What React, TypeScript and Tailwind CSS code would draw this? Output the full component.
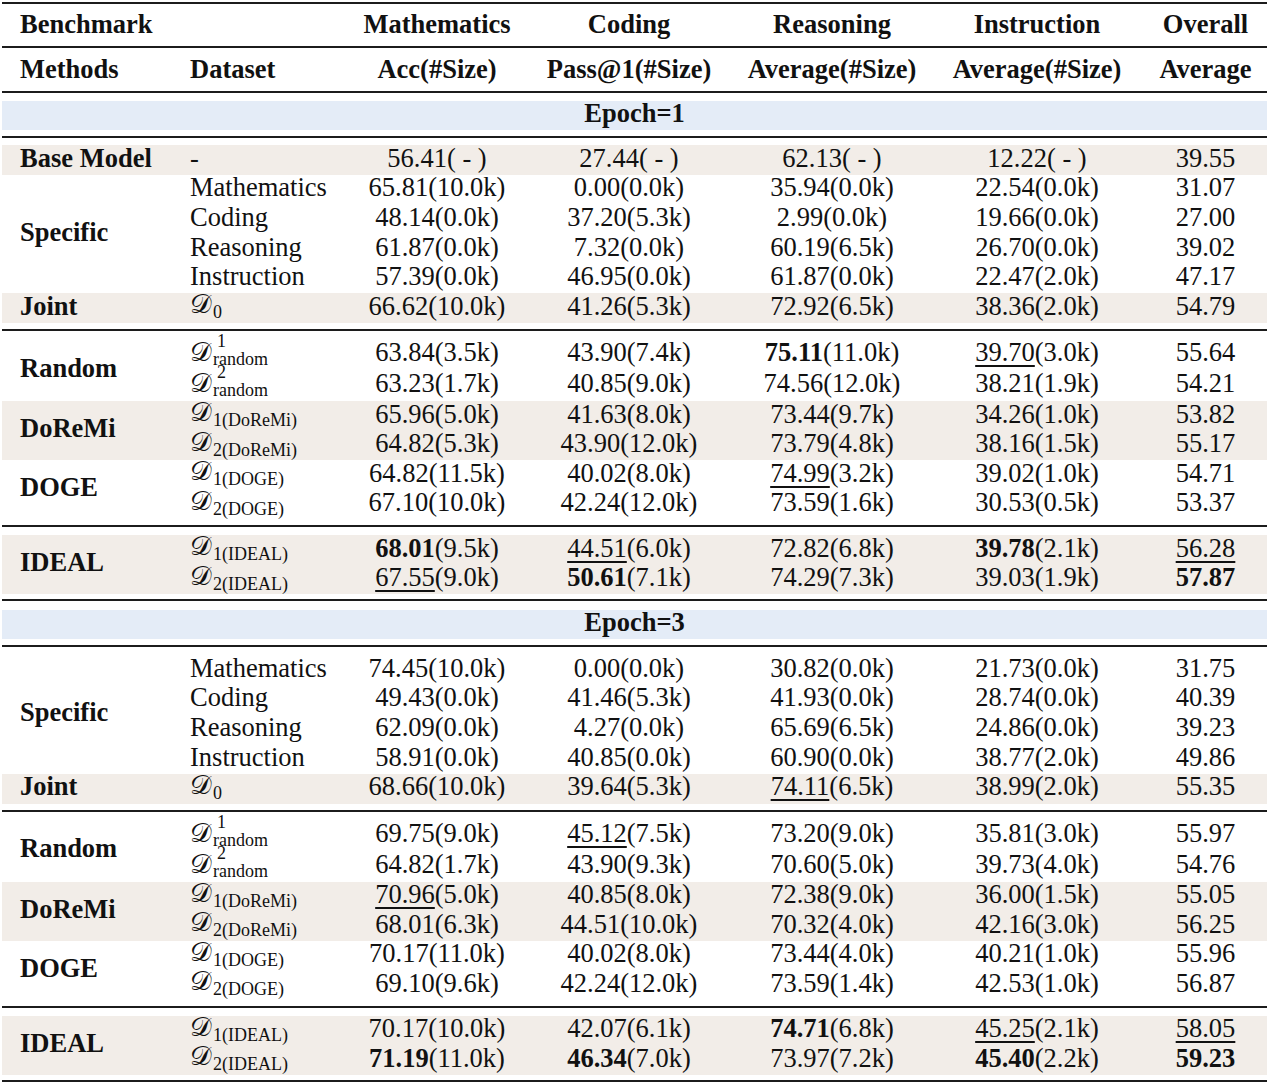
import React from 'react';

const GRID = 'grid grid-cols-[178px_170px_174px_210px_196px_214px_123px]';

function Val({ v }: { v: string }) {
  const m = v.match(/^(\*\*|__)(.+?)\1(.*)$/);
  if (!m) return <>{v}</>;
  const [, mark, head, tail] = m;
  return (
    <>
      {mark === '**' ? (
        <span className="font-bold">{head}</span>
      ) : (
        <span className="underline decoration-[1.5px] underline-offset-[4px]">{head}</span>
      )}
      {tail}
    </>
  );
}

const Cal = () => <span>𝒟</span>;

// D with a plain subscript, e.g. D_1(DoReMi)
const DSub = ({ sub }: { sub: string }) => (
  <span className="whitespace-nowrap">
    <Cal />
    <span className="relative top-[5px] ml-[1px] text-[18px]">{sub}</span>
  </span>
);

// D with stacked sup/sub, e.g. D^1_random
const DRand = ({ n }: { n: string }) => (
  <span className="whitespace-nowrap">
    <Cal />
    <span className="relative ml-[1px] inline-block text-[18px] leading-[12px]">
      <span className="relative top-[4px]">random</span>
      <span className="absolute left-[4px] top-[-14px]">{n}</span>
    </span>
  </span>
);

type Row = { ds: React.ReactNode; cells: string[] };

const SPAN: Record<number, string> = { 1: 'row-span-1', 2: 'row-span-2', 4: 'row-span-4' };

function Group({
  method,
  rows,
  shade,
  rowH,
}: {
  method: string;
  rows: Row[];
  shade?: boolean;
  rowH: string;
}) {
  return (
    <div className={`${GRID} ${rowH} ${shade ? 'bg-[#f2ede8]' : ''}`}>
      <div className={`${SPAN[rows.length]} col-start-1 flex items-center pb-[3px] pl-[18px] font-bold`}>
        {method}
      </div>
      {rows.map((r, i) => (
        <React.Fragment key={i}>
          <div className="col-start-2 flex items-center pb-[3px] pl-[10px]">{r.ds}</div>
          {r.cells.map((c, j) => (
            <div key={j} className="flex items-center justify-center whitespace-pre pb-[3px]">
              <Val v={c} />
            </div>
          ))}
        </React.Fragment>
      ))}
    </div>
  );
}

const Rule = ({ cls }: { cls: string }) => <div className={`h-[2px] bg-[#1c1c1c] ${cls}`} />;

const EpochBand = ({ label }: { label: string }) => (
  <div className="flex h-[29px] items-center justify-center bg-[#e4ecf7] pb-[4px] font-bold">{label}</div>
);

const specific = (vals: string[][]): Row[] =>
  ['Mathematics', 'Coding', 'Reasoning', 'Instruction'].map((n, i) => ({ ds: n, cells: vals[i] }));

export default function App() {
  return (
    <div className="min-h-screen bg-white">
      <div className="ml-[2px] w-[1265px] pt-[2px] font-['Liberation_Serif','Times_New_Roman',serif] text-[26.5px] leading-[29.6px] text-[#111]">
        <Rule cls="" />
        {/* header */}
        <div className={`${GRID} h-[42px] items-center font-bold`}>
          <div className="col-span-2 pl-[18px]">Benchmark</div>
          <div className="text-center">Mathematics</div>
          <div className="text-center">Coding</div>
          <div className="text-center">Reasoning</div>
          <div className="text-center">Instruction</div>
          <div className="text-center">Overall</div>
        </div>
        <Rule cls="h-[1.5px]" />
        <div className={`${GRID} h-[43px] items-center font-bold`}>
          <div className="pl-[18px]">Methods</div>
          <div className="pl-[10px]">Dataset</div>
          <div className="text-center">Acc(#Size)</div>
          <div className="text-center">Pass@1(#Size)</div>
          <div className="text-center">Average(#Size)</div>
          <div className="text-center">Average(#Size)</div>
          <div className="text-center">Average</div>
        </div>
        <Rule cls="mb-[8px]" />
        <EpochBand label="Epoch=1" />
        <Rule cls="mt-[6px] mb-[7px]" />

        <Group
          method="Base Model"
          shade
          rowH="auto-rows-[29.7px]"
          rows={[{ ds: '-', cells: ['56.41( - )', '27.44( - )', '62.13( - )', '12.22( - )', '39.55'] }]}
        />
        <Group
          method="Specific"
          rowH="auto-rows-[29.7px]"
          rows={specific([
            ['65.81(10.0k)', '0.00(0.0k)', '35.94(0.0k)', '22.54(0.0k)', '31.07'],
            ['48.14(0.0k)', '37.20(5.3k)', '2.99(0.0k)', '19.66(0.0k)', '27.00'],
            ['61.87(0.0k)', '7.32(0.0k)', '60.19(6.5k)', '26.70(0.0k)', '39.02'],
            ['57.39(0.0k)', '46.95(0.0k)', '61.87(0.0k)', '22.47(2.0k)', '47.17'],
          ])}
        />
        <Group
          method="Joint"
          shade
          rowH="auto-rows-[29.7px]"
          rows={[{ ds: <DSub sub="0" />, cells: ['66.62(10.0k)', '41.26(5.3k)', '72.92(6.5k)', '38.36(2.0k)', '54.79'] }]}
        />
        <Rule cls="mt-[6px] mb-[8px]" />

        <Group
          method="Random"
          rowH="auto-rows-[31px]"
          rows={[
            { ds: <DRand n="1" />, cells: ['63.84(3.5k)', '43.90(7.4k)', '**75.11**(11.0k)', '__39.70__(3.0k)', '55.64'] },
            { ds: <DRand n="2" />, cells: ['63.23(1.7k)', '40.85(9.0k)', '74.56(12.0k)', '38.21(1.9k)', '54.21'] },
          ]}
        />
        <Group
          method="DoReMi"
          shade
          rowH="auto-rows-[29.5px]"
          rows={[
            { ds: <DSub sub="1(DoReMi)" />, cells: ['65.96(5.0k)', '41.63(8.0k)', '73.44(9.7k)', '34.26(1.0k)', '53.82'] },
            { ds: <DSub sub="2(DoReMi)" />, cells: ['64.82(5.3k)', '43.90(12.0k)', '73.79(4.8k)', '38.16(1.5k)', '55.17'] },
          ]}
        />
        <Group
          method="DOGE"
          rowH="auto-rows-[29.5px]"
          rows={[
            { ds: <DSub sub="1(DOGE)" />, cells: ['64.82(11.5k)', '40.02(8.0k)', '__74.99__(3.2k)', '39.02(1.0k)', '54.71'] },
            { ds: <DSub sub="2(DOGE)" />, cells: ['67.10(10.0k)', '42.24(12.0k)', '73.59(1.6k)', '30.53(0.5k)', '53.37'] },
          ]}
        />
        <Rule cls="mt-[6px] mb-[8px]" />
        <Group
          method="IDEAL"
          shade
          rowH="auto-rows-[29.5px]"
          rows={[
            { ds: <DSub sub="1(IDEAL)" />, cells: ['**68.01**(9.5k)', '__44.51__(6.0k)', '72.82(6.8k)', '**39.78**(2.1k)', '__56.28__'] },
            { ds: <DSub sub="2(IDEAL)" />, cells: ['__67.55__(9.0k)', '**50.61**(7.1k)', '74.29(7.3k)', '39.03(1.9k)', '**57.87**'] },
          ]}
        />
        <Rule cls="mt-[5px] mb-[9px]" />
        <EpochBand label="Epoch=3" />
        <Rule cls="mt-[6px] mb-[8px]" />

        <Group
          method="Specific"
          rowH="auto-rows-[29.7px]"
          rows={specific([
            ['74.45(10.0k)', '0.00(0.0k)', '30.82(0.0k)', '21.73(0.0k)', '31.75'],
            ['49.43(0.0k)', '41.46(5.3k)', '41.93(0.0k)', '28.74(0.0k)', '40.39'],
            ['62.09(0.0k)', '4.27(0.0k)', '65.69(6.5k)', '24.86(0.0k)', '39.23'],
            ['58.91(0.0k)', '40.85(0.0k)', '60.90(0.0k)', '38.77(2.0k)', '49.86'],
          ])}
        />
        <Group
          method="Joint"
          shade
          rowH="auto-rows-[29.7px]"
          rows={[{ ds: <DSub sub="0" />, cells: ['68.66(10.0k)', '39.64(5.3k)', '__74.11__(6.5k)', '38.99(2.0k)', '55.35'] }]}
        />
        <Rule cls="mt-[6px] mb-[8px]" />

        <Group
          method="Random"
          rowH="auto-rows-[31px]"
          rows={[
            { ds: <DRand n="1" />, cells: ['69.75(9.0k)', '__45.12__(7.5k)', '73.20(9.0k)', '35.81(3.0k)', '55.97'] },
            { ds: <DRand n="2" />, cells: ['64.82(1.7k)', '43.90(9.3k)', '70.60(5.0k)', '39.73(4.0k)', '54.76'] },
          ]}
        />
        <Group
          method="DoReMi"
          shade
          rowH="auto-rows-[29.5px]"
          rows={[
            { ds: <DSub sub="1(DoReMi)" />, cells: ['__70.96__(5.0k)', '40.85(8.0k)', '72.38(9.0k)', '36.00(1.5k)', '55.05'] },
            { ds: <DSub sub="2(DoReMi)" />, cells: ['68.01(6.3k)', '44.51(10.0k)', '70.32(4.0k)', '42.16(3.0k)', '56.25'] },
          ]}
        />
        <Group
          method="DOGE"
          rowH="auto-rows-[29.5px]"
          rows={[
            { ds: <DSub sub="1(DOGE)" />, cells: ['70.17(11.0k)', '40.02(8.0k)', '73.44(4.0k)', '40.21(1.0k)', '55.96'] },
            { ds: <DSub sub="2(DOGE)" />, cells: ['69.10(9.6k)', '42.24(12.0k)', '73.59(1.4k)', '42.53(1.0k)', '56.87'] },
          ]}
        />
        <Rule cls="mt-[6px] mb-[8px]" />
        <Group
          method="IDEAL"
          shade
          rowH="auto-rows-[29.5px]"
          rows={[
            { ds: <DSub sub="1(IDEAL)" />, cells: ['70.17(10.0k)', '42.07(6.1k)', '**74.71**(6.8k)', '__45.25__(2.1k)', '__58.05__'] },
            { ds: <DSub sub="2(IDEAL)" />, cells: ['**71.19**(11.0k)', '**46.34**(7.0k)', '73.97(7.2k)', '**45.40**(2.2k)', '**59.23**'] },
          ]}
        />
        <Rule cls="mt-[5px]" />
      </div>
    </div>
  );
}
